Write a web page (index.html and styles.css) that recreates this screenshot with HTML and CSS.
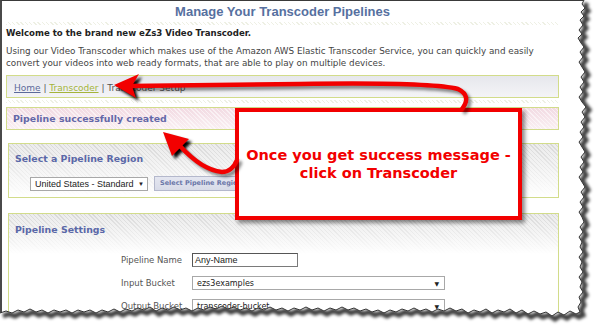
FILE: index.html
```html
<!DOCTYPE html>
<html>
<head>
<meta charset="utf-8">
<link rel="stylesheet" href="styles.css">
</head>
<body>
<div class="page">
  <div class="content">
    <h1 class="title">Manage Your Transcoder Pipelines</h1>
    <div class="sep"></div>
    <p class="welcome">Welcome to the brand new eZs3 Video Transcoder.</p>
    <p class="intro">Using our Video Transcoder which makes use of the Amazon AWS Elastic Transcoder Service, you can quickly and easily<br>convert your videos into web ready formats, that are able to play on multiple devices.</p>
    <div class="crumbs"><a class="home">Home</a> | <a class="cur">Transcoder</a> | Transcoder Setup</div>
    <div class="sep"></div>
    <div class="success">Pipeline successfully created</div>
    <div class="panel region">
      <h2 class="panel-title">Select a Pipeline Region</h2>
      <div class="region-row">
        <div class="select small"><span>United States - Standard</span><span class="caret">▼</span></div>
        <div class="btn">Select Pipeline Region</div>
      </div>
    </div>
    <div class="panel settings">
      <h2 class="panel-title">Pipeline Settings</h2>
      <div class="form">
        <div class="label">Pipeline Name</div>
        <div class="input">Any-Name</div>
        <div class="label">Input Bucket</div>
        <div class="select wide"><span>ezs3examples</span><span class="caret">▼</span></div>
        <div class="label">Output Bucket</div>
        <div class="select wide"><span>transcoder-bucket</span><span class="caret">▼</span></div>
      </div>
    </div>
  </div>
</div>

<div class="callout">Once you get success message -<br>click on Transcoder</div>

<svg class="arrows" width="600" height="327" viewBox="0 0 600 327">
  <defs>
    <filter id="ashadow" x="-10%" y="-10%" width="130%" height="140%">
      <feGaussianBlur stdDeviation="1.6"/>
    </filter>
  </defs>
  <g transform="translate(3,3)" fill="none" stroke="#000" stroke-opacity="0.45" filter="url(#ashadow)">
    <path d="M130,86 L300,84 Q430,82 458,89 Q472,96 462,109" stroke-width="4.5" stroke-linecap="round"/>
    <path d="M180,146 Q202,170 222,172 Q232,172 237,160" stroke-width="4.5" stroke-linecap="round"/>
    <polygon points="114,85 139,74 132,86 136,98" fill="#000" stroke="none"/>
    <polygon points="163,132 189,139 181,147 172,156" fill="#000" stroke="none"/>
  </g>
  <g fill="none" stroke="#f20000">
    <path d="M130,86 L300,84 Q430,82 458,89 Q472,96 462,109" stroke-width="4.5" stroke-linecap="round"/>
    <path d="M180,146 Q202,170 222,172 Q232,172 237,160" stroke-width="4.5" stroke-linecap="round"/>
    <polygon points="114,85 139,74 132,86 136,98" fill="#f20000" stroke="none"/>
    <polygon points="163,132 189,139 181,147 172,156" fill="#f20000" stroke="none"/>
  </g>
</svg>

<svg class="torn" width="600" height="327" viewBox="0 0 600 327">
  <defs>
    <clipPath id="outside">
      <path d="M584,0 L582,4 L585,8 L581,12 L584,16 L580,20 L583,25 L579,30 L582,34 L578,38 L581,43 L584,47 L580,52 L583,57 L579,62 L582,67 L585,72 L581,77 L584,82 L580,87 L583,92 L579,97 L582,102 L586,107 L582,112 L585,117 L581,122 L584,127 L580,132 L583,137 L579,142 L582,147 L585,152 L581,157 L584,162 L580,167 L583,172 L579,177 L582,182 L585,187 L581,192 L584,197 L580,202 L583,207 L579,212 L582,217 L584,222 L580,227 L583,232 L579,237 L582,242 L580,247 L583,252 L579,257 L582,262 L580,267 L583,272 L579,277 L582,282 L580,287 L583,292 L579,297 L581,302 L578,307 L580,312 L576,314 L570,311 L564,315 L558,312 L552,316 L546,312 L540,314 L534,311 L528,314 L522,310 L516,313 L510,309 L504,312 L498,310 L492,313 L486,309 L480,312 L474,310 L468,313 L462,309 L456,311 L450,308 L444,311 L438,309 L432,312 L426,309 L420,311 L414,308 L408,311 L402,309 L396,312 L390,310 L384,313 L378,310 L372,312 L366,309 L360,311 L354,308 L348,310 L342,307 L336,310 L330,308 L324,311 L318,308 L312,310 L306,307 L300,310 L294,308 L288,311 L282,308 L276,310 L270,307 L264,310 L258,308 L252,311 L246,308 L240,310 L234,307 L228,309 L222,306 L216,309 L210,307 L204,310 L198,308 L192,311 L186,308 L180,310 L174,307 L168,310 L162,308 L156,311 L150,307 L144,310 L138,308 L132,311 L126,309 L120,312 L114,309 L108,312 L102,310 L96,313 L90,310 L84,312 L78,310 L72,313 L66,310 L60,312 L54,310 L48,313 L42,310 L36,312 L30,309 L24,312 L18,310 L12,313 L6,311 L0,313 L0,327 L600,327 L600,0 Z"/>
    </clipPath>
    <filter id="tshadow" x="-5%" y="-5%" width="110%" height="110%">
      <feGaussianBlur stdDeviation="1.8"/>
    </filter>
  </defs>
  <path class="torn-fill" d="M584,0 L582,4 L585,8 L581,12 L584,16 L580,20 L583,25 L579,30 L582,34 L578,38 L581,43 L584,47 L580,52 L583,57 L579,62 L582,67 L585,72 L581,77 L584,82 L580,87 L583,92 L579,97 L582,102 L586,107 L582,112 L585,117 L581,122 L584,127 L580,132 L583,137 L579,142 L582,147 L585,152 L581,157 L584,162 L580,167 L583,172 L579,177 L582,182 L585,187 L581,192 L584,197 L580,202 L583,207 L579,212 L582,217 L584,222 L580,227 L583,232 L579,237 L582,242 L580,247 L583,252 L579,257 L582,262 L580,267 L583,272 L579,277 L582,282 L580,287 L583,292 L579,297 L581,302 L578,307 L580,312 L576,314 L570,311 L564,315 L558,312 L552,316 L546,312 L540,314 L534,311 L528,314 L522,310 L516,313 L510,309 L504,312 L498,310 L492,313 L486,309 L480,312 L474,310 L468,313 L462,309 L456,311 L450,308 L444,311 L438,309 L432,312 L426,309 L420,311 L414,308 L408,311 L402,309 L396,312 L390,310 L384,313 L378,310 L372,312 L366,309 L360,311 L354,308 L348,310 L342,307 L336,310 L330,308 L324,311 L318,308 L312,310 L306,307 L300,310 L294,308 L288,311 L282,308 L276,310 L270,307 L264,310 L258,308 L252,311 L246,308 L240,310 L234,307 L228,309 L222,306 L216,309 L210,307 L204,310 L198,308 L192,311 L186,308 L180,310 L174,307 L168,310 L162,308 L156,311 L150,307 L144,310 L138,308 L132,311 L126,309 L120,312 L114,309 L108,312 L102,310 L96,313 L90,310 L84,312 L78,310 L72,313 L66,310 L60,312 L54,310 L48,313 L42,310 L36,312 L30,309 L24,312 L18,310 L12,313 L6,311 L0,313 L0,327 L600,327 L600,0 Z"/>
  <g clip-path="url(#outside)">
    <polyline class="torn-shadow" filter="url(#tshadow)" transform="translate(3,3)" points="584,0 582,4 585,8 581,12 584,16 580,20 583,25 579,30 582,34 578,38 581,43 584,47 580,52 583,57 579,62 582,67 585,72 581,77 584,82 580,87 583,92 579,97 582,102 586,107 582,112 585,117 581,122 584,127 580,132 583,137 579,142 582,147 585,152 581,157 584,162 580,167 583,172 579,177 582,182 585,187 581,192 584,197 580,202 583,207 579,212 582,217 584,222 580,227 583,232 579,237 582,242 580,247 583,252 579,257 582,262 580,267 583,272 579,277 582,282 580,287 583,292 579,297 581,302 578,307 580,312 576,314 570,311 564,315 558,312 552,316 546,312 540,314 534,311 528,314 522,310 516,313 510,309 504,312 498,310 492,313 486,309 480,312 474,310 468,313 462,309 456,311 450,308 444,311 438,309 432,312 426,309 420,311 414,308 408,311 402,309 396,312 390,310 384,313 378,310 372,312 366,309 360,311 354,308 348,310 342,307 336,310 330,308 324,311 318,308 312,310 306,307 300,310 294,308 288,311 282,308 276,310 270,307 264,310 258,308 252,311 246,308 240,310 234,307 228,309 222,306 216,309 210,307 204,310 198,308 192,311 186,308 180,310 174,307 168,310 162,308 156,311 150,307 144,310 138,308 132,311 126,309 120,312 114,309 108,312 102,310 96,313 90,310 84,312 78,310 72,313 66,310 60,312 54,310 48,313 42,310 36,312 30,309 24,312 18,310 12,313 6,311 0,313"/>
  </g>
  <polyline class="torn-edge" points="584,0 582,4 585,8 581,12 584,16 580,20 583,25 579,30 582,34 578,38 581,43 584,47 580,52 583,57 579,62 582,67 585,72 581,77 584,82 580,87 583,92 579,97 582,102 586,107 582,112 585,117 581,122 584,127 580,132 583,137 579,142 582,147 585,152 581,157 584,162 580,167 583,172 579,177 582,182 585,187 581,192 584,197 580,202 583,207 579,212 582,217 584,222 580,227 583,232 579,237 582,242 580,247 583,252 579,257 582,262 580,267 583,272 579,277 582,282 580,287 583,292 579,297 581,302 578,307 580,312 576,314 570,311 564,315 558,312 552,316 546,312 540,314 534,311 528,314 522,310 516,313 510,309 504,312 498,310 492,313 486,309 480,312 474,310 468,313 462,309 456,311 450,308 444,311 438,309 432,312 426,309 420,311 414,308 408,311 402,309 396,312 390,310 384,313 378,310 372,312 366,309 360,311 354,308 348,310 342,307 336,310 330,308 324,311 318,308 312,310 306,307 300,310 294,308 288,311 282,308 276,310 270,307 264,310 258,308 252,311 246,308 240,310 234,307 228,309 222,306 216,309 210,307 204,310 198,308 192,311 186,308 180,310 174,307 168,310 162,308 156,311 150,307 144,310 138,308 132,311 126,309 120,312 114,309 108,312 102,310 96,313 90,310 84,312 78,310 72,313 66,310 60,312 54,310 48,313 42,310 36,312 30,309 24,312 18,310 12,313 6,311 0,313"/>
</svg>
</body>
</html>
```

FILE: styles.css
```css
html, body {
  margin: 0;
  padding: 0;
  background: #fff;
}
body {
  width: 600px;
  height: 327px;
  overflow: hidden;
  position: relative;
  font-family: "DejaVu Sans", Verdana, sans-serif;
}
.page {
  width: 590px;
  height: 327px;
  box-sizing: border-box;
  border-top: 1px solid #3a3a3a;
  border-left: 2px solid #4a4a4a;
  padding: 3px 0 0 4px;
}
.content {
  width: 553px;
}
.title {
  margin: 0;
  font-family: "Liberation Sans", Arial, sans-serif;
  font-size: 13px;
  line-height: 16px;
  font-weight: bold;
  color: #5670a0;
  text-align: center;
}
.sep {
  height: 3px;
  margin: 2px 0;
  background: repeating-linear-gradient(45deg, #eef0e4 0 1px, #fff 1px 3px);
}
.welcome {
  margin: 1px 0 0 0;
  font-size: 8.6px;
  line-height: 12px;
  font-weight: bold;
  color: #222;
}
.intro {
  margin: 6px 0 0 0;
  font-size: 8.8px;
  line-height: 12px;
  color: #444;
}
.crumbs {
  margin-top: 6px;
  height: 23px;
  box-sizing: border-box;
  border: 1px solid #d2dc8a;
  background: linear-gradient(#e6e7ec, #f4f4f7);
  padding: 6px 7px 0;
  font-size: 9px;
  line-height: 12px;
  color: #555;
}
.crumbs a {
  text-decoration: underline;
}
.crumbs .home { color: #5c6a9a; }
.crumbs .cur { color: #a4b43a; }
.success {
  margin-top: 4px;
  height: 23px;
  box-sizing: border-box;
  border: 1px solid #d2dc8a;
  background:
    repeating-linear-gradient(45deg, rgba(255,255,255,0.55) 0 1px, rgba(255,255,255,0) 1px 3px),
    linear-gradient(#f2dae2, #faf0f3);
  padding: 5px 6px 0;
  font-size: 9.4px;
  line-height: 12px;
  font-weight: bold;
  color: #6468a8;
}
.panel {
  margin-left: 2px;
  border: 1px solid #d2dc8a;
  box-sizing: border-box;
  background:
    linear-gradient(rgba(255,255,255,0) 0, #fff 100%),
    repeating-linear-gradient(45deg, #d8d8d8 0 1px, #ececec 1px 3px);
}
.region {
  margin-top: 13px;
  height: 55px;
  padding: 8px 6px 0;
}
.settings {
  margin-top: 15px;
  height: 110px;
  padding: 9px 6px 0;
  background:
    linear-gradient(rgba(255,255,255,0) 0, #fff 40px),
    repeating-linear-gradient(45deg, #d8d8d8 0 1px, #ececec 1px 3px);
}
.panel-title {
  margin: 0;
  font-size: 9.4px;
  line-height: 13px;
  font-weight: bold;
  color: #5a68a8;
}
.region-row {
  display: flex;
  align-items: center;
  gap: 6px;
  margin-top: 11px;
  padding-left: 15px;
}
.select {
  display: flex;
  align-items: center;
  justify-content: space-between;
  box-sizing: border-box;
  background: #fff;
  border: 1px solid #a8a8a8;
  color: #222;
}
.select.small {
  width: 118px;
  height: 14px;
  padding: 0 3px 0 4px;
  font-family: "Liberation Sans", Arial, sans-serif;
  font-size: 9px;
}
.caret {
  font-size: 6px;
  color: #222;
}
.btn {
  height: 15px;
  box-sizing: border-box;
  padding: 0 5px;
  border: 1px solid #b4b8cc;
  background: linear-gradient(#e4e6f0, #d8dbe8);
  font-size: 6.5px;
  line-height: 13px;
  font-weight: bold;
  color: #6a76a8;
  white-space: nowrap;
}
.form {
  display: grid;
  grid-template-columns: 71px 253px;
  row-gap: 9px;
  align-items: center;
  margin-top: 17px;
  padding-left: 106px;
}
.label {
  font-size: 8.5px;
  color: #555;
}
.input {
  width: 106px;
  height: 14px;
  box-sizing: border-box;
  border: 1px solid #7a7a7a;
  border-top-color: #555;
  border-left-color: #555;
  background: #fff;
  padding-left: 2px;
  font-family: "Liberation Sans", Arial, sans-serif;
  font-size: 9px;
  line-height: 12px;
  color: #222;
}
.select.wide {
  width: 253px;
  height: 14px;
  padding: 0 5px 0 4px;
  font-size: 8px;
}
.callout {
  position: absolute;
  left: 235px;
  top: 108px;
  width: 287px;
  height: 112px;
  box-sizing: border-box;
  border: 4px solid #f20000;
  background: #fff;
  box-shadow: 3px 3px 4px rgba(0,0,0,0.45);
  display: flex;
  align-items: center;
  justify-content: center;
  text-align: center;
  font-size: 14.5px;
  line-height: 18px;
  font-weight: bold;
  color: #f20000;
}
.arrows, .torn {
  position: absolute;
  left: 0;
  top: 0;
  pointer-events: none;
}
.torn-fill {
  fill: #fff;
}
.torn-shadow {
  fill: none;
  stroke: #000;
  stroke-opacity: 0.75;
  stroke-width: 5;
}
.torn-edge {
  fill: none;
  stroke: #333;
  stroke-width: 1;
}
```
